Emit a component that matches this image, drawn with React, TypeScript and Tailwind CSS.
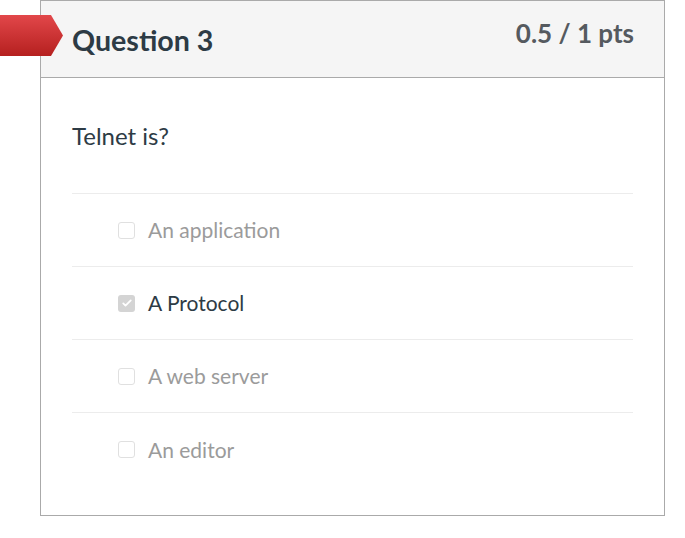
import React from "react";

const ANSWERS = [
  { id: "a1", label: "An application", selected: false },
  { id: "a2", label: "A Protocol", selected: true },
  { id: "a3", label: "A web server", selected: false },
  { id: "a4", label: "An editor", selected: false },
];

function Checkbox({ checked }: { checked: boolean }) {
  if (checked) {
    return (
      <span className="flex h-[17px] w-[17px] flex-shrink-0 items-center justify-center rounded-[3px] bg-[#d4d4d4]">
        <svg viewBox="0 0 16 16" className="h-[12px] w-[12px]" fill="none">
          <path d="M3 8.5l3 3 7-7" stroke="#fff" strokeWidth="2.4" strokeLinecap="round" strokeLinejoin="round" />
        </svg>
      </span>
    );
  }
  return <span className="h-[17px] w-[17px] flex-shrink-0 rounded-[3px] border border-[#e0e0e0] bg-white" />;
}

export default function App() {
  return (
    <div className="relative min-h-[538px] bg-white pl-[40px] font-['Lato','Noto_Sans',sans-serif]">
      {/* flag marker */}
      <svg className="absolute left-0 top-[15px]" width="64" height="41" viewBox="0 0 64 41">
        <defs>
          <linearGradient id="flag" x1="0" y1="0" x2="0" y2="1">
            <stop offset="0" stopColor="#e2474a" />
            <stop offset="1" stopColor="#b5201f" />
          </linearGradient>
        </defs>
        <polygon points="0,0 51,0 63,20.5 51,41 0,41" fill="url(#flag)" />
      </svg>

      <div className="w-[625px] border border-[#aaaaaa]">
        <div className="flex h-[77px] items-start justify-between border-b border-[#aaaaaa] bg-[#f5f5f5] pl-[31px] pr-[30px]">
          <h2 className="mt-[20px] text-[28.6px] font-bold leading-[38px] text-[#2d3b45]">Question 3</h2>
          <div className="mt-[15px] text-[26px] font-bold leading-[34px] text-[#555a5f]">0.5 / 1 pts</div>
        </div>

        <div className="px-[31px] pb-[29px] pt-[42px]">
          <p className="mb-[41px] text-[24px] leading-[32px] text-[#2d3b45]">Telnet is?</p>
          {ANSWERS.map((a, i) => (
            <div
              key={a.id}
              className={`flex items-center gap-[13px] pl-[46px] ${i === 0 ? "h-[74px] border-t" : "h-[73px]"} ${
                i < ANSWERS.length - 1 ? "border-b" : ""
              } border-[#ececec]`}
            >
              <Checkbox checked={a.selected} />
              <span className={`text-[21px] ${a.selected ? "text-[#2d3b45]" : "text-[#9b9b9b]"}`}>{a.label}</span>
            </div>
          ))}
        </div>
      </div>
    </div>
  );
}
